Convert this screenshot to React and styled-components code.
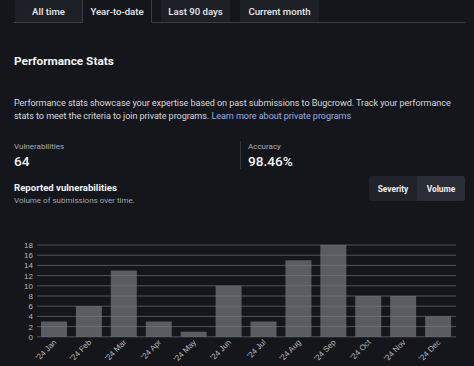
import React from 'react'
import styled, { createGlobalStyle } from 'styled-components'

const Global = createGlobalStyle`
  body {
    margin: 0;
    background: #14161b;
    font-family: Roboto, "Noto Sans", sans-serif;
    color: #e6e8eb;
  }
`

const Page = styled.div`
  width: 474px;
  height: 366px;
  overflow: hidden;
  padding: 0 9px 0 14px;
  box-sizing: border-box;
`

const TabBar = styled.div`
  display: flex;
  height: 22px;
  border-bottom: 1px solid #3a3d44;
`

const Tab = styled.div`
  display: flex;
  align-items: center;
  justify-content: center;
  width: ${(p) => p.w}px;
  margin-left: ${(p) => p.ml || 0}px;
  box-sizing: border-box;
  font-size: 9.6px;
  font-weight: 500;
  color: #e8eaed;
  background: ${(p) => (p.active ? '#14161b' : '#1d2027')};
  border-left: ${(p) => (p.active ? '1px solid #3a3d44' : 'none')};
  border-right: ${(p) => (p.active ? '1px solid #3a3d44' : 'none')};
  margin-bottom: ${(p) => (p.active ? '-1px' : '0')};
  height: ${(p) => (p.active ? '23px' : '22px')};
`

const Heading = styled.h2`
  margin: 31px 0 0;
  font-size: 11.8px;
  font-weight: 700;
  color: #f3f4f6;
  line-height: 14px;
`

const Intro = styled.p`
  margin: 29px 0 0;
  font-size: 9.1px;
  letter-spacing: -0.08px;
  line-height: 13px;
  color: #d4d7dc;
  a {
    color: #8fb0e8;
    text-decoration: none;
  }
`

const Stats = styled.div`
  display: grid;
  grid-template-columns: 226px 1fr;
  margin-top: 18px;
`

const Stat = styled.div`
  padding-left: ${(p) => (p.divided ? '7px' : '0')};
  border-left: ${(p) => (p.divided ? '1px solid #33363d' : 'none')};
  display: flex;
  flex-direction: column;
`

const StatLabel = styled.span`
  font-size: 8px;
  line-height: 12px;
  color: #a9adb4;
`

const StatValue = styled.span`
  font-size: 13.6px;
  font-weight: 500;
  line-height: 16px;
  color: #f3f4f6;
`

const SectionRow = styled.div`
  display: flex;
  justify-content: space-between;
  align-items: flex-start;
  margin-top: 12px;
`

const SectionTitle = styled.div`
  font-size: 9.6px;
  font-weight: 700;
  line-height: 13px;
  color: #f0f1f3;
`

const SectionSub = styled.div`
  font-size: 8px;
  line-height: 13px;
  color: #a3a7ae;
`

const Segmented = styled.div`
  display: flex;
  height: 25px;
  border-radius: 3px;
  overflow: hidden;
  margin-top: -5px;
`

const Segment = styled.div`
  width: 48px;
  display: flex;
  align-items: center;
  justify-content: center;
  font-size: 8.4px;
  font-weight: 700;
  color: #eceef1;
  background: ${(p) => (p.active ? '#2a2d35' : '#20232a')};
`

const ChartBox = styled.div`
  margin-top: 28px;
  margin-left: -14px;
`

const months = ['Jan', 'Feb', 'Mar', 'Apr', 'May', 'Jun', 'Jul', 'Aug', 'Sep', 'Oct', 'Nov', 'Dec']
const values = [3, 6, 13, 3, 1, 10, 3, 15, 18, 8, 8, 4]

function Chart() {
  const top = 10
  const step = 5.1
  const y0 = top + 18 * step
  const left = 37
  const right = 456
  const slot = (right - left) / 12
  const ticks = [0, 2, 4, 6, 8, 10, 12, 14, 16, 18]
  return (
    <svg width="474" height="131" viewBox="0 0 474 131">
      {ticks.map((t) => (
        <text
          key={t}
          x="33"
          y={y0 - t * step + 3}
          textAnchor="end"
          fontSize="8"
          fill="#b4b7bd"
          fontFamily="Liberation Sans, Arial, sans-serif"
        >
          {t}
        </text>
      ))}
      {values.map((v, i) => {
        const x = left + i * slot + 4
        const h = v * step
        return <rect key={i} x={x} y={y0 - h} width="26" height={h} fill="#5a5c61" />
      })}
      {ticks.map((t) => (
        <line
          key={t}
          x1={left}
          x2={right}
          y1={y0 - t * step}
          y2={y0 - t * step}
          stroke="#7a7d83"
          strokeOpacity="0.6"
          strokeWidth="1"
        />
      ))}
      {months.map((m, i) => {
        const cx = left + i * slot + 20
        const cy = y0 + 6
        return (
          <text
            key={m}
            x={cx}
            y={cy}
            transform={`rotate(-45 ${cx} ${cy})`}
            textAnchor="end"
            fontSize="8"
            fill="#b4b7bd"
            fontFamily="Liberation Sans, Arial, sans-serif"
          >
            {`'24 ${m}`}
          </text>
        )
      })}
    </svg>
  )
}

export default function App() {
  return (
    <Page>
      <Global />
      <TabBar>
        <Tab w={67} ml={1}>All time</Tab>
        <Tab w={70} active>Year-to-date</Tab>
        <Tab w={69} ml={9}>Last 90 days</Tab>
        <Tab w={79} ml={10}>Current month</Tab>
      </TabBar>
      <Heading>Performance Stats</Heading>
      <Intro>
        Performance stats showcase your expertise based on past submissions to Bugcrowd. Track your performance
        stats to meet the criteria to join private programs. <a href="#">Learn more about private programs</a>
      </Intro>
      <Stats>
        <Stat>
          <StatLabel>Vulnerabilities</StatLabel>
          <StatValue>64</StatValue>
        </Stat>
        <Stat divided>
          <StatLabel>Accuracy</StatLabel>
          <StatValue>98.46%</StatValue>
        </Stat>
      </Stats>
      <SectionRow>
        <div>
          <SectionTitle>Reported vulnerabilities</SectionTitle>
          <SectionSub>Volume of submissions over time.</SectionSub>
        </div>
        <Segmented>
          <Segment>Severity</Segment>
          <Segment active>Volume</Segment>
        </Segmented>
      </SectionRow>
      <ChartBox>
        <Chart />
      </ChartBox>
    </Page>
  )
}
